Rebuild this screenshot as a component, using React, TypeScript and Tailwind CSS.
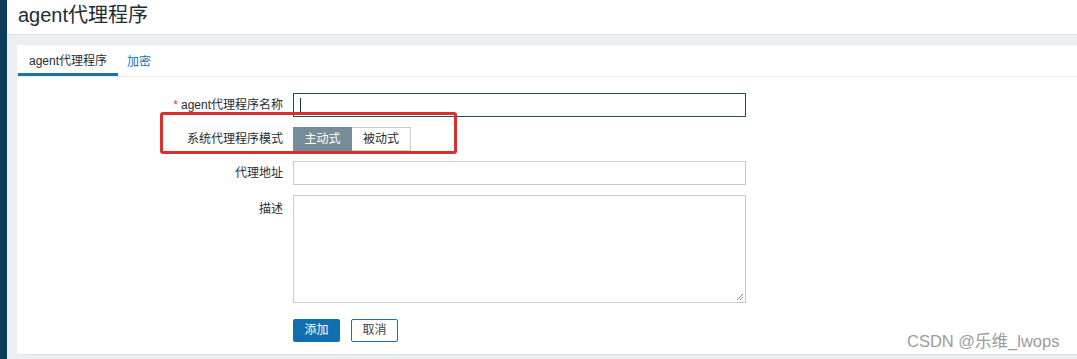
import React from "react";

const font = { fontFamily: '"Liberation Sans", Arial, "Noto Sans CJK SC", sans-serif' };

export default function App() {
  return (
    <div className="relative h-[359px] w-[1077px] overflow-hidden bg-[#ebeef2] text-[#1f2c33]" style={font}>
      <div className="flex h-full">
        {/* left nav edge */}
        <div className="w-[7px] shrink-0 bg-[#0b3d5b]" />

        <div className="flex min-w-0 flex-1 flex-col">
          {/* page header */}
          <div className="flex h-[35px] items-center border-b border-[#dfe4e7] bg-white pb-[4px] pl-[11px]">
            <h1 className="text-[20px] leading-none">agent代理程序</h1>
          </div>

          <div className="pl-[10px] pt-[10px]">
            <div className="h-[310px] border-b border-[#dfe4e7] bg-white">
              {/* tabs */}
              <div className="flex h-[32px] border-b border-[#ebeef0] pl-px text-[12px]">
                <div className="flex h-full items-center border-b-[3px] border-[#1b72a8] px-[11px] pt-[3px]">
                  agent代理程序
                </div>
                <div className="flex h-full items-center px-[9px] pt-[3px] text-[#1f6fb0]">加密</div>
              </div>

              {/* form */}
              <div className="pt-[16px] text-[12px]">
                <div className="flex h-[24px] items-center">
                  <div className="w-[276px] pr-[10px] text-right">
                    <span className="mr-[3px] text-[#e0403a]">*</span>agent代理程序名称
                  </div>
                  <div className="flex h-[24px] w-[453px] items-center border border-[#1f4d69] bg-white pl-[6px]">
                    <span className="h-[14px] w-px bg-[#1f2c33]" />
                  </div>
                </div>

                <div className="mt-[10px] flex h-[24px] items-center">
                  <div className="w-[276px] pr-[10px] text-right">系统代理程序模式</div>
                  <div className="flex h-[24px]">
                    <div className="flex w-[59px] items-center justify-center border border-[#768c98] bg-[#768c98] text-white">
                      主动式
                    </div>
                    <div className="flex w-[59px] items-center justify-center border border-[#c5cbcf] border-l-0 bg-white">
                      被动式
                    </div>
                  </div>
                </div>

                <div className="mt-[10px] flex h-[24px] items-center">
                  <div className="w-[276px] pr-[10px] text-right">代理地址</div>
                  <div className="h-[24px] w-[453px] border border-[#c5cbcf] bg-white" />
                </div>

                <div className="mt-[10px] flex items-start">
                  <div className="w-[276px] pr-[10px] pt-[5px] text-right">描述</div>
                  <div className="relative h-[108px] w-[453px] border border-[#c5cbcf] bg-white">
                    <svg className="absolute bottom-[1px] right-[1px]" width="9" height="9" viewBox="0 0 9 9">
                      <path d="M8 2 L2 8 M8 5 L5 8" stroke="#8a8f93" strokeWidth="1" />
                    </svg>
                  </div>
                </div>

                <div className="mt-[15px] flex h-[24px] items-center gap-[11px] pl-[276px]">
                  <div className="flex h-[23px] w-[47px] items-center justify-center rounded-[2px] bg-[#0f6fb1] text-white">
                    添加
                  </div>
                  <div className="flex h-[23px] w-[47px] items-center justify-center rounded-[2px] border border-[#1f6fb0] bg-white text-[#3a4348]">
                    取消
                  </div>
                </div>
              </div>
            </div>
          </div>
        </div>
      </div>

      {/* red annotation box */}
      <div className="absolute left-[160px] top-[112px] h-[42px] w-[297px] rounded-[3px] border-[3px] border-[#d8312d]" />

      {/* watermark */}
      <div className="absolute left-[907px] top-[329px] text-[16.5px] text-[#9b9b9b]">CSDN @乐维_lwops</div>
    </div>
  );
}
